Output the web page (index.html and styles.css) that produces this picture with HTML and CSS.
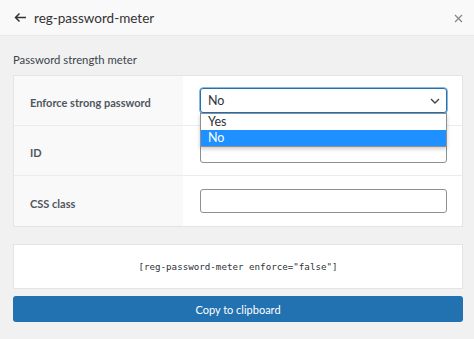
FILE: index.html
```html
<!DOCTYPE html>
<html lang="en">
  <head>
    <meta charset="UTF-8" />
    <title>reg-password-meter</title>
    <link rel="stylesheet" href="styles.css">
  </head>
  <body>
    <header class="topbar">
      <div class="titel">
        <svg class="pil" width="13" height="11" viewBox="0 0 13 11">
          <path d="M12 5.5H1.5M5.5 1.5L1.5 5.5L5.5 9.5" fill="none" stroke="#333" stroke-width="1.5" />
        </svg>
        <span>reg-password-meter</span>
      </div>
      <svg class="luk" width="9" height="9" viewBox="0 0 9 9">
        <path d="M1 1L8 8M8 1L1 8" stroke="#888" stroke-width="1.3" />
      </svg>
    </header>

    <main>
      <p class="sektion">Password strength meter</p>

      <div class="felter">
        <div class="raekke">
          <div class="label">Enforce strong password</div>
          <div class="input-celle">
            <div class="vaelg">
              <span>No</span>
              <svg width="10" height="6" viewBox="0 0 10 6">
                <path d="M1 1L5 5L9 1" fill="none" stroke="#444" stroke-width="1.4" />
              </svg>
              <!-- åben dropdown ligger over næste række -->
              <ul class="muligheder">
                <li>Yes</li>
                <li class="valgt">No</li>
              </ul>
            </div>
          </div>
        </div>
        <div class="raekke">
          <div class="label">ID</div>
          <div class="input-celle"><div class="felt"></div></div>
        </div>
        <div class="raekke">
          <div class="label">CSS class</div>
          <div class="input-celle"><div class="felt"></div></div>
        </div>
      </div>

      <div class="kode">[reg-password-meter enforce="false"]</div>
      <div class="knap">Copy to clipboard</div>
    </main>
  </body>
</html>
```

FILE: styles.css
```css
* {
  margin: 0px;
  padding: 0px;
  box-sizing: border-box;
}

body {
  font-family: "Lato", "Open Sans", sans-serif;
  background-color: #f1f1f1;
  color: #3c434a;
  width: 474px;
  height: 339px;
  overflow: hidden;
}

/* Toppen */
.topbar {
  height: 36px;
  background-color: #f9f9f9;
  border-bottom: 1px solid #e8e8e8;
  display: flex;
  align-items: center;
  justify-content: space-between;
  padding: 0 11px 0 14px;
}
.titel {
  display: flex;
  align-items: center;
  gap: 7px;
  font-size: 13.5px;
  color: #333;
}
.luk {
  margin-top: 1px;
}

main {
  padding: 0 11px 0 13px;
}

.sektion {
  font-size: 11.3px;
  color: #3c434a;
  padding-top: 17px;
  height: 39px;
}

/* Felterne */
.felter {
  border: 1px solid #e4e4e4;
  background-color: #fff;
}
.raekke {
  display: grid;
  grid-template-columns: 169px 1fr;
  height: 50px;
  border-bottom: 1px solid #ececec;
}
.raekke:last-child {
  border-bottom: none;
}
.label {
  background-color: #f9f9f9;
  display: flex;
  align-items: center;
  padding-left: 16px;
  padding-top: 4px;
  font-size: 11px;
  font-weight: 700;
  color: #50575e;
}
.input-celle {
  display: flex;
  align-items: center;
  padding: 0 15px 0 17px;
}
.felt {
  width: 100%;
  height: 24px;
  border: 1px solid #8c8f94;
  border-radius: 3px;
  background-color: #fff;
}

.vaelg {
  position: relative;
  width: 100%;
  height: 25px;
  border: 1px solid #2271b1;
  border-radius: 3px;
  display: flex;
  align-items: center;
  justify-content: space-between;
  padding: 0 6px 0 7px;
  font-size: 12.5px;
  color: #2c3338;
  box-shadow: 0 0 0 0.5px #2271b1;
}
.muligheder {
  position: absolute;
  left: -1px;
  right: -1px;
  top: 24px;
  list-style-type: none;
  background-color: #fff;
  border: 1px solid #8c8f94;
  box-shadow: 0 2px 4px rgba(0, 0, 0, 0.2);
  z-index: 10;
}
.muligheder li {
  height: 16px;
  line-height: 16px;
  padding-left: 7px;
  font-size: 12.5px;
  color: #2c3338;
}
.muligheder .valgt {
  background-color: #1e90ff;
  color: white;
}

/* Koden og knappen */
.kode {
  margin-top: 17px;
  height: 45px;
  width: 450px;
  background-color: #fff;
  border: 1px solid #e4e4e4;
  display: flex;
  align-items: center;
  justify-content: center;
  font-family: "DejaVu Sans Mono", monospace;
  font-size: 9.2px;
  color: #2c3338;
}
.knap {
  margin-top: 7px;
  height: 26px;
  width: 450px;
  background-color: #2271b1;
  border-radius: 3px;
  color: white;
  font-size: 11px;
  display: flex;
  align-items: center;
  justify-content: center;
}
```
